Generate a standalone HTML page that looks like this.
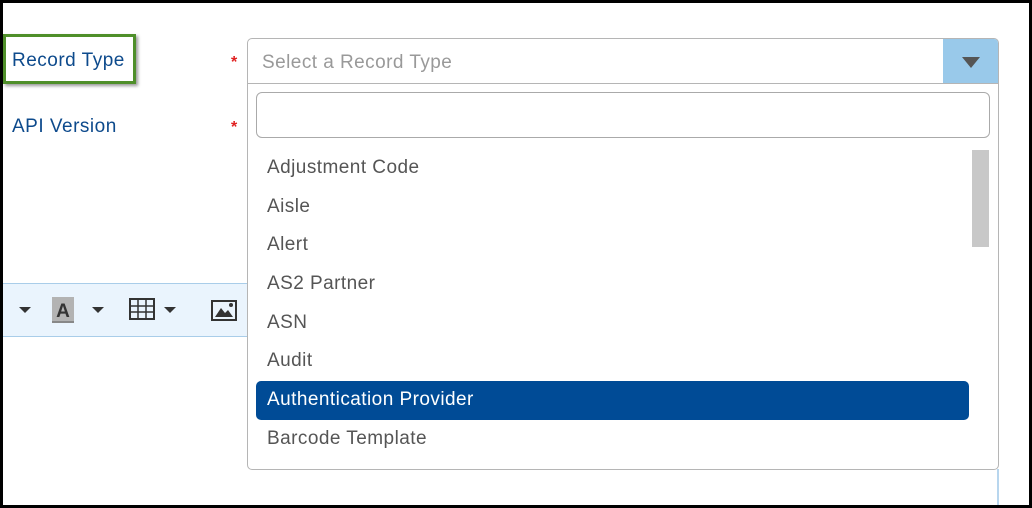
<!DOCTYPE html>
<html><head><style>
*{margin:0;padding:0;box-sizing:border-box}
body{width:1032px;height:508px;background:#000;position:relative;overflow:hidden;font-family:"Liberation Sans",Arial,sans-serif}
#pg{position:absolute;left:3px;top:3px;width:1026px;height:502px;background:#fff;overflow:hidden}
.a{position:absolute}
.lbl{color:#0d4a8c;font-size:19px;letter-spacing:.5px}
.star{color:#e02020;font-size:16px;font-weight:bold}
.item{position:absolute;left:267px;font-size:19px;letter-spacing:.45px;color:#555;line-height:20px}
</style></head><body>
<div id="pg">
<div class="a" style="left:0;top:31px;width:133px;height:50px;border:3px solid #4f8f2a;box-shadow:2px 2px 3px rgba(0,0,0,.4)"></div>
<div class="a lbl" style="left:9px;top:47px">Record Type</div>
<div class="a lbl" style="left:9px;top:113px">API Version</div>
<div class="a star" style="left:228px;top:51px">*</div>
<div class="a star" style="left:228px;top:116px">*</div>
<div class="a" style="left:0;top:280px;width:246px;height:54px;background:#eaf4fd;border-top:1px solid #a9cde9;border-bottom:1px solid #a9cde9"></div>
<svg class="a" style="left:0;top:280px" width="246" height="54">
<polygon points="16,24 28,24 22,30" fill="#333"/>
<rect x="49" y="14" width="22" height="24" fill="#b3b3b3"/>
<rect x="49" y="38" width="22" height="2" fill="#888"/>
<text x="60" y="34" font-family="Liberation Sans" font-weight="bold" font-size="19" fill="#333" text-anchor="middle">A</text>
<polygon points="89,24 101,24 95,30" fill="#333"/>
<rect x="127" y="16" width="24" height="20" fill="none" stroke="#333" stroke-width="2"/>
<path d="M127 23h24M127 29h24M135 16v20M143 16v20" stroke="#333" stroke-width="1.5"/>
<polygon points="161,24 173,24 167,30" fill="#333"/>
<rect x="209" y="18" width="24" height="19" fill="none" stroke="#333" stroke-width="2"/>
<path d="M212 34l6-9 4 5 3-3 5 7z" fill="#333"/><circle cx="228" cy="22" r="2" fill="#333"/>
</svg>
<div class="a" style="left:994px;top:466px;width:2px;height:40px;background:#b8d6ee"></div>
<div class="a" style="left:244px;top:35px;width:752px;height:432px;border:1px solid #b5b5b5;border-radius:5px;background:#fff"></div>
<div class="a" style="left:245px;top:80px;width:750px;height:1px;background:#b5b5b5"></div>
<div class="a" style="left:940px;top:36px;width:55px;height:44px;background:#99c9ea;border-radius:0 4px 0 0"></div>
<svg class="a" style="left:958px;top:52px" width="20" height="14"><polygon points="1,2 19,2 10,13" fill="#555"/></svg>
<div class="a" style="left:259px;top:49px;font-size:19px;letter-spacing:.45px;color:#999">Select a Record Type</div>
<div class="a" style="left:253px;top:89px;width:734px;height:46px;border:1px solid #aaa;border-radius:6px"></div>
<div class="a" style="left:969px;top:147px;width:17px;height:97px;background:#c8c8c8"></div>
<div class="a" style="left:253px;top:378px;width:713px;height:39px;background:#004b96;border-radius:5px"></div>
</div>
<div class="item" style="top:158px">Adjustment Code</div>
<div class="item" style="top:197px">Aisle</div>
<div class="item" style="top:235px">Alert</div>
<div class="item" style="top:274px">AS2 Partner</div>
<div class="item" style="top:313px">ASN</div>
<div class="item" style="top:351px">Audit</div>
<div class="item" style="top:390px;color:#fff">Authentication Provider</div>
<div class="item" style="top:429px">Barcode Template</div>
</body></html>
